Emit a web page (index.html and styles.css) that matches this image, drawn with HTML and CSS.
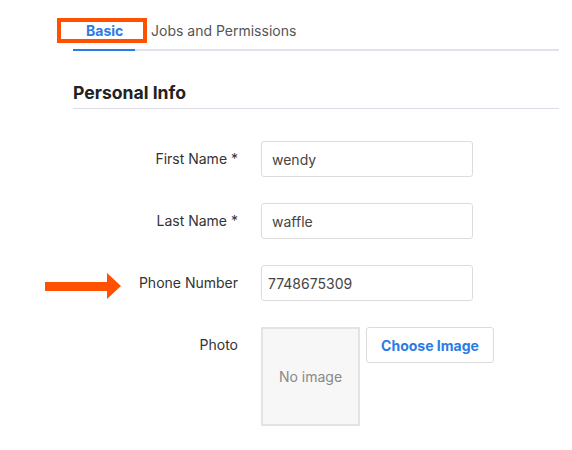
FILE: index.html
```html
<!DOCTYPE html>
<html lang="en">
<head>
<meta charset="utf-8">
<title>Basic</title>
<link rel="stylesheet" href="styles.css">
</head>
<body>
<div class="page">
  <nav class="tabs">
    <a class="tab tab-active">Basic</a>
    <a class="tab">Jobs and Permissions</a>
    <span class="callout-box"></span>
  </nav>

  <h2 class="section-title">Personal Info</h2>

  <form class="form">
    <label class="field-label">First Name *</label>
    <div class="field"><input class="text-input" value="wendy"></div>

    <label class="field-label">Last Name *</label>
    <div class="field"><input class="text-input" value="waffle"></div>

    <label class="field-label">Phone Number</label>
    <div class="field"><input class="text-input tight" value="7748675309"></div>

    <label class="field-label">Photo</label>
    <div class="field photo-field">
      <div class="photo-box">No image</div>
      <button type="button" class="choose-btn">Choose Image</button>
    </div>
  </form>

  <svg class="callout-arrow" width="76" height="26" viewBox="0 0 76 26">
    <polygon points="0,9 62,9 62,0 76,13 62,26 62,18 0,18" fill="#ff5100"/>
  </svg>
</div>
</body>
</html>
```

FILE: styles.css
```css
* { box-sizing: border-box; }
html, body { margin: 0; background: #fff; }
body {
  font-family: Inter, "Liberation Sans", sans-serif;
  color: #333;
}
.page {
  position: relative;
  width: 572px;
  height: 450px;
  padding: 19px 13px 0 73px;
}
.tabs {
  position: relative;
  display: flex;
  height: 32px;
  border-bottom: 2px solid #e1e1ea;
}
.tab {
  display: block;
  padding: 3px 13px 0;
  font-size: 14px;
  line-height: 18px;
  color: #555;
  margin-right: 3px;
}
.tab-active {
  width: 62px;
  text-align: center;
  color: #2c7be5;
  font-weight: 700;
  border-bottom: 2px solid #2c7be5;
  margin-bottom: -2px;
}
.callout-box {
  position: absolute;
  left: -16px;
  top: -1px;
  width: 90px;
  height: 25px;
  border: 4px solid #ff5100;
}
.section-title {
  margin: 31px 0 0;
  padding-bottom: 4px;
  font-size: 17.6px;
  line-height: 22px;
  font-weight: 700;
  color: #222;
  border-bottom: 1px solid #dcdce6;
}
.form {
  display: grid;
  grid-template-columns: 165px 212px;
  column-gap: 23px;
  row-gap: 26px;
  margin-top: 32px;
}
.field-label {
  text-align: right;
  font-size: 14px;
  line-height: 36px;
  color: #333;
}
.text-input {
  display: block;
  width: 212px;
  height: 36px;
  border: 1px solid #dcdcdc;
  border-radius: 3px;
  padding: 0 10px;
  font-family: inherit;
  font-size: 14px;
  color: #444;
}
.text-input.tight { padding-left: 6px; }
.photo-field {
  display: flex;
  gap: 6px;
  align-items: flex-start;
}
.photo-box {
  width: 99px;
  height: 99px;
  flex: none;
  display: flex;
  align-items: center;
  justify-content: center;
  background: #f7f7f7;
  border: 2px solid #e3e3e3;
  font-size: 14px;
  color: #888;
}
.choose-btn {
  flex: none;
  width: 128px;
  height: 36px;
  background: #fff;
  border: 1px solid #dcdcdc;
  border-radius: 3px;
  font-family: inherit;
  font-size: 14px;
  font-weight: 700;
  color: #2c7be5;
}
.callout-arrow {
  position: absolute;
  left: 45px;
  top: 273px;
}
```
